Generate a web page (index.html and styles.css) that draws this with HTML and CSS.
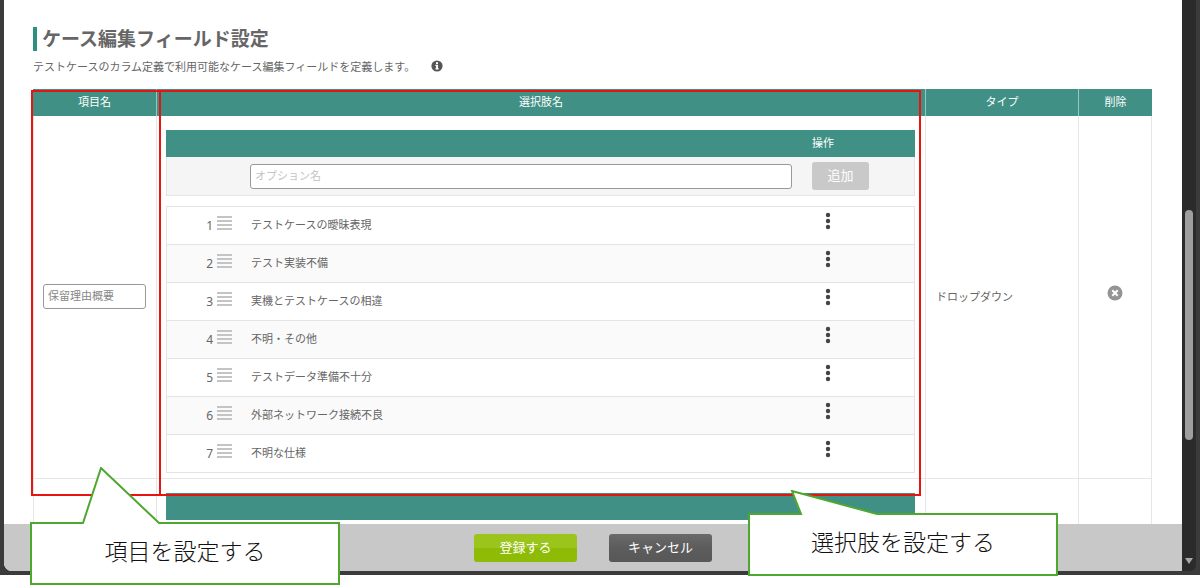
FILE: index.html
```html
<!DOCTYPE html>
<html lang="ja">
<head>
    <meta charset="UTF-8">
    <meta name="viewport" content="width=device-width, initial-scale=1.0">
    <title>ケース編集フィールド設定</title>
    <link rel="stylesheet" href="styles.css">
</head>
<body>
    <div class="window">
        <div class="page">
            <main class="content">
                <h1>ケース編集フィールド設定</h1>
                <p class="lead">テストケースのカラム定義で利用可能なケース編集フィールドを定義します。<svg class="info" viewBox="0 0 12 12"><circle cx="6" cy="6" r="5.6"/><path d="M5 2.2h2v1.7H5zM4.4 4.8H7v3.4h.7v1.3H4.4V8.2h.7V6.1h-.7z"/></svg></p>

                <div class="table-wrap">
                    <table class="fields">
                        <colgroup>
                            <col class="col-item">
                            <col>
                            <col class="col-type">
                            <col class="col-delete">
                        </colgroup>
                        <thead>
                            <tr>
                                <th>項目名</th>
                                <th>選択肢名</th>
                                <th>タイプ</th>
                                <th>削除</th>
                            </tr>
                        </thead>
                        <tbody>
                            <tr>
                                <td class="item"><input class="text-box" type="text" value="保留理由概要" aria-label="項目名"></td>
                                <td class="choices">
                                    <table class="add-option">
                                        <thead>
                                            <tr><th class="col-no"></th><th></th><th class="col-op">操作</th></tr>
                                        </thead>
                                        <tbody>
                                            <tr>
                                                <td></td>
                                                <td class="name"><input class="text-box" type="text" placeholder="オプション名" aria-label="オプション名"></td>
                                                <td><button class="add" type="button">追加</button></td>
                                            </tr>
                                        </tbody>
                                    </table>
                                    <table class="options">
                                        <tbody id="options"></tbody>
                                    </table>
                                </td>
                                <td class="type">ドロップダウン</td>
                                <td class="delete">
                                    <button type="button" aria-label="削除"><svg viewBox="0 0 16 16"><circle cx="8" cy="8" r="7.5"/><path d="M5.3 5.3l5.4 5.4M10.7 5.3l-5.4 5.4"/></svg></button>
                                </td>
                            </tr>
                            <tr>
                                <td></td>
                                <td class="choices">
                                    <table class="add-option">
                                        <thead>
                                            <tr><th class="col-no"></th><th></th><th class="col-op"></th></tr>
                                        </thead>
                                    </table>
                                </td>
                                <td></td>
                                <td></td>
                            </tr>
                        </tbody>
                    </table>
                    <div class="mark mark-item"></div>
                    <div class="mark mark-choices"></div>
                </div>
            </main>
            <footer>
                <button class="submit" type="button">登録する</button>
                <button class="cancel" type="button">キャンセル</button>
            </footer>
        </div>
        <div class="scrollbar">
            <div class="thumb"></div>
            <svg class="arrow" viewBox="0 0 8 6"><path d="M0 0h8L4 6z"/></svg>
        </div>
    </div>

    <div class="callout callout-item">
        <svg viewBox="0 0 310 118"><path d="M1 56H53L71 1L129 56H309V117H1z"/></svg>
        <p>項目を設定する</p>
    </div>
    <div class="callout callout-choices">
        <svg viewBox="0 0 310 86"><path d="M1 24H53L44 1L129 24H309V85H1z"/></svg>
        <p>選択肢を設定する</p>
    </div>

    <script>
        const options = [
            'テストケースの曖昧表現',
            'テスト実装不備',
            '実機とテストケースの相違',
            '不明・その他',
            'テストデータ準備不十分',
            '外部ネットワーク接続不良',
            '不明な仕様'
        ];

        document.getElementById('options').innerHTML = options.map((name, i) => `
            <tr>
                <td class="col-no"><span class="no">${i + 1}<svg class="grip" viewBox="0 0 15 15"><path d="M0 1h15M0 5h15M0 9h15M0 13h15"/></svg></span></td>
                <td class="name">${name}</td>
                <td class="col-op">
                    <button class="menu" type="button" aria-label="メニュー"><svg viewBox="0 0 6 18"><circle cx="3" cy="3" r="2.2"/><circle cx="3" cy="9" r="2.2"/><circle cx="3" cy="15" r="2.2"/></svg></button>
                </td>
            </tr>`).join('');
    </script>
</body>
</html>
```
FILE: styles.css
```css
* {
    box-sizing: border-box;
}

body {
    margin: 0;
    height: 100vh;
    position: relative;
    overflow: hidden;
    background: #fff;
    color: #666;
    font-family: "Noto Sans CJK JP", sans-serif;
    font-size: 11px;
    line-height: 18px;
}

button,
input {
    font-family: inherit;
}

button {
    padding: 0;
    border: none;
    cursor: pointer;
}

svg {
    display: block;
}

.window {
    display: flex;
    height: calc(100vh - 10px);
    border: solid #3c3b3b;
    border-width: 0 4px 4px;
    background: #3c3b3b;
}

.page {
    flex: 1;
    display: flex;
    flex-direction: column;
    min-width: 0;
    background: #fff;
    border-bottom-left-radius: 8px;
    overflow: hidden;
}

.content {
    flex: 1;
    min-height: 0;
    overflow: hidden;
    padding: 27px 30px 0 29px;
}

h1 {
    margin: 0;
    padding: 0 0 2px 5px;
    border-left: 4px solid #2b9080;
    font-size: 19px;
    line-height: 22px;
}

.lead {
    display: flex;
    align-items: center;
    margin: 6px 0 14px;
}

.info {
    width: 12px;
    height: 12px;
    margin-left: 16px;
    fill: #555;
}

.info path {
    fill: #fff;
}

/* field table */

.table-wrap {
    position: relative;
}

table {
    width: 100%;
    table-layout: fixed;
    border-collapse: separate;
    border-spacing: 0;
}

th {
    height: 27px;
    padding: 0 10px 3px;
    background: #409085;
    color: #fff;
    font-weight: 400;
}

td {
    padding: 0 10px;
}

.fields > thead th + th {
    border-left: 1px solid #9cc5bf;
}

.fields > tbody > tr > td {
    border-left: 1px solid #e6e6e6;
    border-bottom: 1px solid #e6e6e6;
}

.fields > tbody > tr > td:last-child {
    border-right: 1px solid #e6e6e6;
}

.col-item {
    width: 123px;
}

.col-type {
    width: 153px;
}

.col-delete {
    width: 74px;
}

.fields > tbody > tr > .choices {
    padding: 14px 10px 5px 9px;
}

.fields > tbody > tr > .item {
    padding: 0 10px 2px 9px;
}

.fields > tbody > tr > .type {
    padding-bottom: 3px;
}

.text-box {
    display: block;
    width: 100%;
    height: 25px;
    padding: 0 4px 3px;
    border: 1px solid #999;
    border-radius: 3px;
    background: #fff;
    color: #888;
    font-size: 11px;
}

.text-box::placeholder {
    color: #c4c4c4;
}

.col-no {
    width: 75px;
}

.col-op {
    width: 113px;
    text-align: left;
}

.add-option td {
    height: 39px;
    background: #f5f5f5;
    border-bottom: 1px solid #e4e4e4;
}

.add-option td:first-child {
    border-left: 1px solid #e4e4e4;
}

.add-option td:last-child {
    border-right: 1px solid #e4e4e4;
}

.add-option .name {
    padding-left: 9px;
}

.add {
    display: block;
    width: 57px;
    height: 28px;
    padding-bottom: 3px;
    border-radius: 3px;
    background: #c9c9c9;
    color: #fff;
    font-size: 13px;
}

.options {
    margin-top: 10px;
    border: 1px solid #e4e4e4;
    border-bottom: none;
}

.options td {
    height: 38px;
    border-bottom: 1px solid #e4e4e4;
}

.options .name {
    padding: 0 9px 4px;
}

.options .col-op {
    padding: 0 11px 9px;
}

.options tr:nth-child(even) {
    background: #fafafa;
}

.no {
    display: flex;
    justify-content: flex-end;
    align-items: center;
    gap: 4px;
    font-family: "Noto Sans", sans-serif;
    font-size: 12px;
}

.grip {
    width: 15px;
    height: 15px;
    margin-bottom: 4px;
    stroke: #c4c4c4;
    stroke-width: 2;
}

.menu {
    display: block;
    width: 32px;
    height: 26px;
    background: none;
}

.menu svg {
    width: 6px;
    height: 18px;
    margin: 0 auto;
    fill: #444;
}

.delete button {
    display: block;
    margin: 0 auto;
    padding-bottom: 8px;
    background: none;
}

.delete svg {
    width: 16px;
    height: 16px;
    fill: #949494;
    stroke: #fff;
    stroke-width: 2;
}

.delete circle {
    stroke: none;
}

/* footer */

footer {
    display: flex;
    justify-content: center;
    align-items: center;
    gap: 32px;
    height: 47px;
    background: #c8c8c8;
}

footer button {
    width: 103px;
    height: 28px;
    padding-bottom: 3px;
    border-radius: 3px;
    color: #fff;
    font-size: 13px;
}

.submit {
    background: linear-gradient(#9bc41c 50%, #8ebb06 50%);
}

.cancel {
    background: linear-gradient(#6a6a6a, #5c5c5c 50%, #585858);
}

/* scrollbar */

.scrollbar {
    display: grid;
    grid-template-rows: 21fr 23fr 11fr 21px;
    justify-items: center;
    width: 14px;
    background: #2b2b2b;
    border-bottom-right-radius: 6px;
}

.thumb {
    grid-row: 2;
    width: 8px;
    border-radius: 4px;
    background: #9e9e9e;
}

.arrow {
    grid-row: 4;
    align-self: center;
    width: 8px;
    height: 6px;
    fill: #a8a8a8;
}

/* annotations over the page */

.mark {
    position: absolute;
    top: 1px;
    height: 406px;
    border: 2px solid #e8140f;
    pointer-events: none;
}

.mark-item {
    left: -2px;
    width: 130px;
}

.mark-choices {
    left: 126px;
    right: 231px;
}

.callout {
    position: absolute;
    width: 310px;
}

.callout svg {
    width: 100%;
    fill: #fff;
    stroke: #4ea72e;
    stroke-width: 2;
}

.callout p {
    position: absolute;
    left: 0;
    right: 0;
    bottom: 4px;
    margin: 0;
    color: #111;
    font-size: 23px;
    font-weight: 300;
    line-height: 62px;
    text-align: center;
}

.callout-item {
    left: 30px;
    bottom: 0;
}

.callout-choices {
    right: 142px;
    bottom: 9px;
}
```
